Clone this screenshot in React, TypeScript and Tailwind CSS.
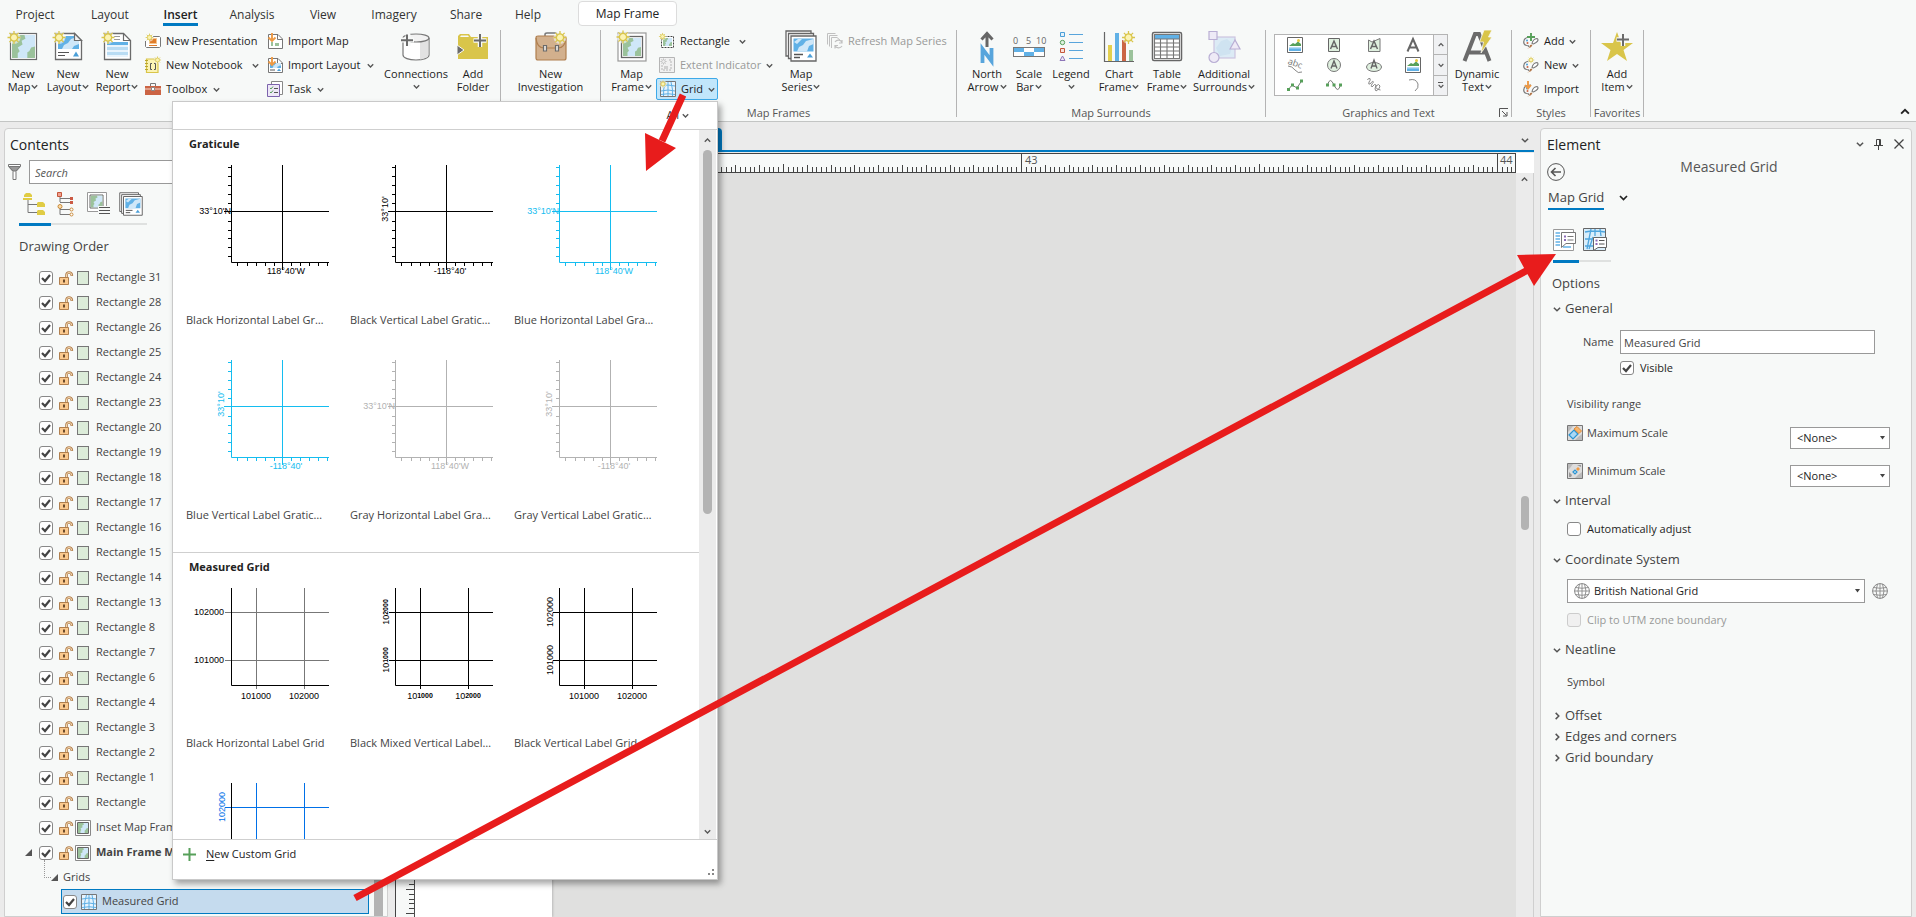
import React from 'react';

const Chev = ({ dir = 'down', size = 7, className = 'text-[#555]' }: { dir?: string; size?: number; className?: string }) => {
  const d = dir === 'up' ? 'M1 6 L4.5 2.5 L8 6' : dir === 'right' ? 'M3 1 L6.5 4.5 L3 8' : 'M1 3 L4.5 6.5 L8 3';
  return (
    <svg width={size} height={size} viewBox="0 0 9 9" className={`inline-block shrink-0 ${className}`}>
      <path d={d} fill="none" stroke="currentColor" strokeWidth="1.7" />
    </svg>
  );
};

const Icon = ({ size = 32, box = 32, children }: { size?: number; box?: number; children: React.ReactNode }) => (
  <svg width={size} height={size} viewBox={`0 0 ${box} ${box}`} fill="none" className="shrink-0 overflow-visible">
    {children}
  </svg>
);

const Sun = ({ x, y, s = 1, color = '#d9c54a', fill = '#fbf3b4' }: { x: number; y: number; s?: number; color?: string; fill?: string }) => (
  <g transform={`translate(${x} ${y}) scale(${s})`} stroke={color} strokeWidth="1.3">
    <circle r="6.5" fill="#f7f9f8" stroke="none" opacity=".6" />
    <path d="M0 -6.5V6.5M-6.5 0H6.5M-4.6 -4.6L4.6 4.6M-4.6 4.6L4.6 -4.6" />
    <circle r="3.6" fill={fill} />
  </g>
);

const MapArt = ({ x, y, w, h, land = '#9bc29b', sea = '#cfe7f8' }: { x: number; y: number; w: number; h: number; land?: string; sea?: string }) => (
  <svg x={x} y={y} width={w} height={h} viewBox="0 0 24 24" preserveAspectRatio="none">
    <path d="M0 0H24V24H0Z" fill={land} />
    <path d="M13 0H24V12L20 13L18 17L16 18V24H6V19L8 17L6 13L11 10L10 6L14 4Z" fill={sea} />
    <path d="M24 14V24H19V19L21 16Z" fill={land} />
  </svg>
);

const NewMapIcon = () => (
  <Icon>
    <rect x="3.500" y="3.500" width="26" height="26" fill="#fff" stroke="#6b6b6b" strokeWidth="1.2" />
    <MapArt x={5} y={5} w={23} h={23} />
    <Sun x={7} y={7.5} />
  </Icon>
);

const NewLayoutIcon = () => (
  <Icon>
    <path d="M3.500 3.500H22.500L29.500 10.500V29.500H3.500Z" fill="#fff" stroke="#6b6b6b" strokeWidth="1.3" />
    <path d="M6 6H22V11H27V19H6Z" fill="#61b1e6" />
    <path d="M10 19L12 15L16 13L19 9L22 8V11H27V14L22 16L20 19ZM6 6H14L11 11L6 13Z" fill="#cfe7f8" />
    <path d="M22.500 3.500V10.500H29.500Z" fill="#f3f3f3" stroke="#6b6b6b" strokeWidth="1.2" />
    <path d="M6 22.500H17M6 25.500H13" stroke="#555" strokeWidth="1.2" />
    <path d="M21 26.500L24 21.500L27 26.500Z" fill="#4b9fd8" />
    <Sun x={7} y={7.5} />
  </Icon>
);

const NewReportIcon = () => (
  <Icon>
    <path d="M3.500 3.500H22.500L29.500 10.500V29.500H3.500Z" fill="#fff" stroke="#6b6b6b" strokeWidth="1.3" />
    <path d="M22.500 3.500V10.500H29.500" stroke="#6b6b6b" strokeWidth="1.2" />
    <path d="M13 6.500H19M13 9.500H19" stroke="#999" />
    <path d="M6 12H27V15H6Z" fill="#61b1e6" />
    <path d="M6 15H27V27H6Z" fill="#e9f4fc" />
    <path d="M6 17H27V20H6ZM6 22H27V25H6Z" fill="#b9dcf3" />
    <Sun x={7} y={7.5} />
  </Icon>
);

const ConnectionsIcon = () => (
  <Icon>
    <path d="M3 8V25C3 28 9 30 16 30S29 28 29 25V8" fill="#fff" stroke="#777" strokeWidth="1.2" />
    <path d="M20 12C26 11 28.400 10 28.400 9V25C28.400 27 25 29 20 29.400Z" fill="#e2e2e2" />
    <ellipse cx="16" cy="8" rx="13" ry="4" fill="#f2f2f2" stroke="#777" strokeWidth="1.2" />
    <path d="M8 4V16M2 10H14" stroke="#f7f9f8" strokeWidth="5" />
    <path d="M7 4.500V16M1 10.200H13" stroke="#6b6b6b" strokeWidth="2" />
  </Icon>
);

const AddFolderIcon = () => (
  <Icon>
    <path d="M1 6L3 4H12L14 7H31V29H1Z" fill="#d9c54a" />
    <path d="M3 7L4 5.500H11L12 7Z" fill="#f7f9f8" />
    <path d="M0 15L7 20L0 25Z" fill="#6b6b6b" stroke="#f7f9f8" />
    <path d="M23 4V17M16.500 10.500H29.500" stroke="#f7f9f8" strokeWidth="4.500" />
    <path d="M23 4V17M17 10.500H29" stroke="#6b6b6b" strokeWidth="2" />
  </Icon>
);

const InvestigationIcon = () => (
  <Icon>
    <path d="M10 6V4.500Q10 3 12 3H20Q22 3 22 4.500V6" stroke="#777" strokeWidth="1.500" />
    <path d="M1 8Q1 6 3 6H29Q31 6 31 8V28Q31 30 29 30H3Q1 30 1 28Z" fill="#d2b08d" stroke="#b07f4f" strokeWidth="1.200" />
    <path d="M1 8Q2 18 9 18H23Q30 18 31 8" stroke="#b07f4f" strokeWidth="1.200" />
    <path d="M8.500 15.500H11.500V21H8.500ZM20.500 15.500H23.500V21H20.500Z" fill="#e8e4de" stroke="#6b6b6b" strokeWidth="1.200" />
    <Sun x={25} y={7.5} />
  </Icon>
);

const MapFrameIcon = () => (
  <Icon>
    <rect x="2" y="3" width="28" height="28" fill="#fff" stroke="#999" strokeWidth="1.2" />
    <rect x="5.500" y="6.500" width="21" height="21" fill="#fff" stroke="#666" strokeWidth="1.300" />
    <MapArt x={7} y={8} w={18} h={18} />
    <Sun x={7} y={7} />
  </Icon>
);

const MapSeriesIcon = ({ size = 32 }: { size?: number }) => (
  <Icon size={size}>
    <path d="M1 1H26V26H1Z" fill="#fff" stroke="#666" strokeWidth="1.300" />
    <path d="M3.500 3.500H28.500V28.500H3.500Z" fill="#fff" stroke="#666" strokeWidth="1.300" />
    <path d="M6 6H31V31H6Z" fill="#fff" stroke="#666" strokeWidth="1.300" />
    <path d="M8.500 8.500H28.500V21.500H8.500Z" fill="#61b1e6" />
    <path d="M12 21.500L14 17L18 15L21 11L28.500 9V14L24 16L22 21.500ZM9 12L13 9H17L12 14Z" fill="#cfe7f8" />
    <path d="M9 24.500H18M9 27.500H15" stroke="#555" strokeWidth="1.300" />
    <path d="M22 27.500L25 23.500L28 27.500Z" fill="#4b9fd8" />
  </Icon>
);

const NorthArrowIcon = () => (
  <Icon>
    <path d="M16 17V4M10.500 9.500L16 3.500L21.500 9.500" stroke="#666" strokeWidth="3" />
    <path d="M11.500 33V19L20.500 31V18" stroke="#58a5dc" strokeWidth="3.800" />
  </Icon>
);

const ScaleBarIcon = () => (
  <Icon>
    <text x="0" y="14" fontSize="9" fill="#666">0</text>
    <text x="13" y="14" fontSize="9" fill="#666">5</text>
    <text x="23" y="14" fontSize="9" fill="#666">10</text>
    <rect x="0.500" y="17.500" width="31" height="9" fill="#fff" stroke="#777" />
    <path d="M1 18H11V22H1ZM21 18H31V22H21ZM11 22H21V26H11Z" fill="#61b1e6" />
  </Icon>
);

const LegendIcon = () => (
  <Icon>
    <path d="M5.500 2.500H9.500V6.500H5.500Z" stroke="#4b9fd8" fill="#e3f1fb" />
    <circle cx="7.500" cy="12.500" r="2.200" stroke="#57a05a" fill="#dff0df" />
    <path d="M5.500 18.500H9.500V22.500H5.500Z" stroke="#c4573a" fill="#f8e0da" />
    <path d="M5 30.500L7.500 26L10 30.500Z" stroke="#8d76b8" fill="#eee8f7" />
    <path d="M14 4.500H28M14 12.500H28M14 20.500H28M14 28.500H28" stroke="#58a5dc" />
  </Icon>
);

const ChartIcon = () => (
  <Icon>
    <path d="M1.500 2V31.500H31" stroke="#666" strokeWidth="1.200" />
    <path d="M5 15H9V31H5Z" fill="#e3d04f" />
    <path d="M12 3H16V31H12Z" fill="#61b1e6" />
    <path d="M19 10H23V31H19Z" fill="#cb6444" />
    <path d="M26 20H30V31H26Z" fill="#9bc29b" />
    <Sun x={25.5} y={7.5} />
  </Icon>
);

const TableIcon = () => (
  <Icon>
    <rect x="1.500" y="2.500" width="29" height="28" rx="1.500" fill="#fff" stroke="#666" strokeWidth="1.500" />
    <rect x="4" y="5" width="24" height="4" fill="#61b1e6" />
    <path d="M3.500 4.500H28.500V28.500H3.500ZM3.500 9H28.500M3.500 13H28.500M3.500 17H28.500M3.500 21H28.500M3.500 25H28.500M9.500 9V28.500M16 9V28.500M22.500 9V28.500" stroke="#777" strokeWidth="1.100" />
  </Icon>
);

const SurroundsIcon = () => (
  <Icon>
    <rect x="6" y="7" width="21" height="21" fill="#dcebf5" stroke="#ccc4e0" strokeWidth="1.200" />
    <path d="M8 18L13 11L19 9L25 14L22 24L12 26Z" fill="#cfe3f1" />
    <path d="M1 1.500H9V9.500H1Z" fill="#eeeaf6" stroke="#b9aed4" strokeWidth="1.200" />
    <path d="M22 19L27 10L32 19Z" fill="#eeeaf6" stroke="#b9aed4" strokeWidth="1.200" />
    <circle cx="6" cy="27.500" r="5" fill="#eeeaf6" stroke="#b9aed4" strokeWidth="1.200" />
  </Icon>
);

const DynamicTextIcon = () => (
  <Icon>
    <path d="M3.500 31L14 4H18L28.500 31M8 22.500H24" stroke="#6b6b6b" strokeWidth="4" />
    <path d="M23 0H31L27.500 7H31L20 23L22.500 12H18.500Z" fill="#d9c54a" stroke="#f7f9f8" strokeWidth=".8" />
  </Icon>
);

const StarIcon = () => (
  <Icon>
    <path d="M16 2L20 13H32L22.500 20L26 31L16 24L6 31L9.500 20L0 13H12Z" fill="#d9c54a" />
    <path d="M22 3V16M15.500 9.500H28.500" stroke="#f7f9f8" strokeWidth="4.500" />
    <path d="M22 4V16M16 9.500H28" stroke="#6b6b6b" strokeWidth="2" />
  </Icon>
);

/* 16px icons */
const PresentationIcon = () => (
  <Icon size={16} box={16}>
    <path d="M8 3.500H14.500L15.500 4.500V13.500L14.500 14.500H1.500L.5 13.500V8" stroke="#777" fill="#fff" />
    <path d="M4.500 5.500H11.500V10.500H4.500Z" fill="#e07b2a" stroke="#f5c38b" />
    <path d="M4 12.500H12" stroke="#e07b2a" />
    <Sun x={4.500} y={4.500} s={0.6} />
  </Icon>
);

const NotebookIcon = () => (
  <Icon size={16} box={16}>
    <path d="M1.500 2H13V15.500H1.500Z" fill="#fbf3b4" stroke="#d9c54a" strokeWidth="1.200" />
    <path d="M0 3.500H3M0 6.500H3M0 9.500H3M0 12.500H3" stroke="#b9a52e" />
    <path d="M7 6.500H5.500V12.500H7M9 6.500H10.500V12.500H9" stroke="#555" />
    <Sun x={12.500} y={3} s={0.55} />
  </Icon>
);

const ToolboxIcon = () => (
  <Icon size={16} box={16}>
    <path d="M5.500 5V2.500H10.500V5" stroke="#777" />
    <path d="M0 5H16V14H0Z" fill="#cb6444" />
    <path d="M0 8H16" stroke="#f3d9d0" />
    <path d="M6.500 6.500H9.500V9.500H6.500Z" fill="#fff" stroke="#888" />
  </Icon>
);

const ImportMapIcon = ({ layout = false }: { layout?: boolean }) => (
  <Icon size={16} box={16}>
    <path d="M1.500 1.500H11L15.500 6V15.500H1.500Z" fill="#fff" stroke="#777" />
    <path d="M10.500 1.500V6.500H15" stroke="#777" />
    {layout ? (
      <>
        <MapArt x={3} y={6} w={11} h={5} land="#61b1e6" />
        <path d="M3 13H8" stroke="#555" />
        <path d="M10 14L12 11.500L14 14Z" fill="#4b9fd8" />
      </>
    ) : (
      <path d="M4 9H6V13H4ZM8 10H12V13H8Z" fill="#9bc29b" />
    )}
    <path d="M5 0V8M1.500 4.500L5 8L8.500 4.500" stroke="#ee9a45" strokeWidth="1.900" />
  </Icon>
);

const TaskIcon = () => (
  <Icon size={16} box={16}>
    <path d="M4.500 .500H15.500V13.500H4.500Z" fill="#fff" stroke="#888" />
    <path d="M.5 3.500H12.500V15.500H.5Z" fill="#eee8f7" stroke="#7c63ad" />
    <path d="M3 7L4 8L6 5.500M3 11L4 12L6 9.500" stroke="#57a05a" />
    <path d="M7 7.500H11M7 11.500H11" stroke="#555" />
  </Icon>
);

const RectangleIcon = () => (
  <Icon size={16} box={16}>
    <path d="M2.500 3.500H14.500V14.500H2.500Z" fill="#fff" stroke="#444" strokeDasharray="2 1" />
    <MapArt x={4} y={5} w={9} h={8} />
    <Sun x={3.500} y={3.500} s={0.55} />
  </Icon>
);

const ExtentIcon = () => (
  <Icon size={16} box={16}>
    <path d="M.5 .5H15.500V15.500H.5Z" fill="#f1f1f1" stroke="#b5b5b5" />
    <path d="M3 8V13H12V3H9" stroke="#b5b5b5" strokeDasharray="2 1" />
    <path d="M5 9H9V12H5Z" fill="#cfcfcf" />
    <Sun x={4.500} y={4.500} s={0.5} color="#b5b5b5" fill="#eee" />
  </Icon>
);

const GridIcon = ({ sun = false }: { sun?: boolean }) => (
  <Icon size={16} box={16}>
    <path d="M.5 .5H15.500V15.500H.5Z" fill="#e7f4fd" stroke="#777" />
    <path d="M1 5Q8 3 15 5M1 10Q8 8 15 10M1 13.500Q8 12 15 13.500M5.500 1Q3 8 3.500 15M8 1V15M11 1Q13 8 12.500 15" stroke="#5fb0e5" />
    {sun && <Sun x={3} y={3} s={0.55} />}
  </Icon>
);

const RefreshIcon = () => (
  <Icon size={16} box={16}>
    <path d="M.5 11.500V.5H8.500M2.500 13.500V2.500H10.500M4.500 15V4.500H10L13 7" stroke="#c0c0c0" />
    <path d="M15 9.500A4 4 0 0 0 8 9M8 12.500A4 4 0 0 0 15 13M15 7V10H12M8 15.500V12.500H11" stroke="#c0c0c0" strokeWidth="1.200" />
  </Icon>
);

const PaletteIcon = ({ kind }: { kind: string }) => (
  <Icon size={16} box={16}>
    <path d="M8 4Q1 4 .7 9Q.8 12 3.500 12.500Q6 12.500 6 14" stroke="#777" strokeWidth="1.200" />
    <circle cx="4" cy="7.500" r="1" fill="#4b9fd8" />
    <circle cx="4.500" cy="10" r="1" fill="#cb6444" />
    <path d="M9 10.500Q10 6 14 5.500Q16.500 7 13 9.500L10.500 11Z" fill="#fff" stroke="#777" strokeWidth="1.100" />
    <path d="M4 15.500Q7 15 7 12L9.500 11.500Q9 15 4 15.500Z" fill="#b3774a" />
    {kind === 'add' && <path d="M8 0V8M4 4H12" stroke="#57a05a" strokeWidth="1.900" />}
    {kind === 'new' && <Sun x={8} y={3} s={0.5} />}
    {kind === 'import' && <path d="M5 0V7M2 4L5 7.500L8 4" stroke="#ee9a45" strokeWidth="1.900" />}
  </Icon>
);

const PictureArt = () => (
  <g>
    <path d="M.5 .5H15.500V15.500H.5Z" fill="#fff" stroke="#666" />
    <path d="M2 9L6 6L8 7L11 4.500L14 7V9Z" fill="#57a05a" />
    <path d="M2 10H14V14H2Z" fill="#61b1e6" />
    <path d="M2 10H14V11.500H2Z" fill="#b9dcf3" />
    <circle cx="11.500" cy="3.500" r="1.500" fill="#e8c93a" />
  </g>
);

const galleryIcons: React.ReactNode[] = [
  <PictureArt />,
  <g><path d="M2.500 1.500H13.500V14.500H2.500Z" fill="#dff0df" stroke="#666" /><path d="M4.500 12L8 4L11.500 12M6 9.500H10" stroke="#666" strokeWidth="1.500" /></g>,
  <g><path d="M2.500 3L6 5L14 1.500V14.500H2.500Z" fill="#dff0df" stroke="#777" /><path d="M4.500 12L8 4L11.500 12M6 9.500H10" stroke="#666" strokeWidth="1.500" /></g>,
  <path d="M2.500 14.500L8 2L13.500 14.500M4.500 10.500H11.500" stroke="#666" strokeWidth="2" />,
  <g><path d="M1 9Q5 9 8 13T15 15" stroke="#888" /><text x="0" y="8" fontSize="9" fill="#777" transform="rotate(20 4 8)">abc</text></g>,
  <g><circle cx="8" cy="8" r="6.500" fill="#dff0df" stroke="#777" /><path d="M5 11.500L8 4L11 11.500M6 9H10" stroke="#666" strokeWidth="1.400" /></g>,
  <g><ellipse cx="8" cy="10" rx="7.500" ry="4.500" fill="#dff0df" stroke="#777" /><path d="M5 11.500L8 3L11 11.500M6 9H10" stroke="#666" strokeWidth="1.400" /></g>,
  <PictureArt />,
  <g><path d="M1.500 12.500L5 8L10 11L14.500 4" stroke="#777" /><path d="M0 11H3V14H0ZM4 6.500H7V9.500H4ZM9 9.500H12V12.500H9ZM13 2.500H16V5.500H13Z" fill="#57a05a" /></g>,
  <g><path d="M1.500 8Q4 -1 8 8T14.500 8" stroke="#777" /><path d="M0 6.500H3V9.500H0ZM6.500 6.500H9.500V9.500H6.500ZM13 6.500H16V9.500H13Z" fill="#57a05a" /></g>,
  <path d="M1.500 3Q2 1 4 1.500Q5 3 3 5Q2 8 4 7Q7 3 7.500 5Q4 9 6 10Q9 6 10 8Q8 13 10 14Q14 12 14 9Q13 6 10 9Q9 12 14.500 13" stroke="#888" />,
  <path d="M4 3Q11 1 13 7Q14 11 10 14" stroke="#888" />,
];

/* Ribbon pieces */
const Big = ({ icon, a, b, chev = false, w }: { icon: React.ReactNode; a: string; b?: string; chev?: boolean; w: string }) => (
  <button className={`flex flex-col items-center leading-[13px] whitespace-nowrap ${w}`}>
    {icon}
    <span className="mt-[5px]">{a}</span>
    <span className="flex h-[13px] items-center gap-px">
      {b}
      {chev && <Chev />}
    </span>
  </button>
);

const Small = ({ icon, label, chev = false, gap = 'gap-[6px]', className = '' }: { icon: React.ReactNode; label: string; chev?: boolean; gap?: string; className?: string }) => (
  <button className={`flex h-[22px] items-center gap-[5px] whitespace-nowrap ${className}`}>
    {icon}
    <span className={`flex items-center ${gap}`}>
      {label}
      {chev && <Chev />}
    </span>
  </button>
);

const Group = ({ label, w, children, launcher = false }: { label?: string; w: string; children: React.ReactNode; launcher?: boolean }) => (
  <div className={`relative flex h-[87px] shrink-0 flex-col border-r border-[#b4b4b4] ${w}`}>
    <div className="flex h-[74px] shrink-0 items-start">{children}</div>
    <div className="text-center leading-[18px] text-[#555]">{label}</div>
    {launcher && (
      <button aria-label="Open group options" className="absolute right-[3px] bottom-0">
        <svg width="9" height="9" viewBox="0 0 9 9" fill="none" stroke="#555" className="block">
          <path d="M.5 9V.5H9M3 3L7.500 7.500M8 4V8H4" />
        </svg>
      </button>
    )}
  </div>
);

const tabs = [
  { name: 'Project', w: 'w-[70px]' },
  { name: 'Layout', w: 'w-[80px]' },
  { name: 'Insert', w: 'w-[61px]' },
  { name: 'Analysis', w: 'w-[82px]' },
  { name: 'View', w: 'w-[60px]' },
  { name: 'Imagery', w: 'w-[82px]' },
  { name: 'Share', w: 'w-[62px]' },
  { name: 'Help', w: 'w-[62px]' },
];

const Ribbon = () => (
  <header className="h-[122px] shrink-0 border-b border-[#c3c5c4] bg-[#f7f9f8]">
    <nav className="flex h-[30px] text-[12px] text-[#333]">
      {tabs.map((tab) => (
        <button key={tab.name} className={`flex flex-col items-center pt-[6px] ${tab.w}`}>
          <span className={tab.name === 'Insert' ? 'border-b-3 border-[#007ac2] px-px leading-[17px] font-semibold text-[#222]' : 'leading-[17px]'}>
            {tab.name}
          </span>
        </button>
      ))}
      <button className="mt-px ml-[19px] h-[25px] w-[99px] rounded-sm border border-[#dcdcdc] bg-white text-[#222]">Map Frame</button>
    </nav>
    <div className="flex text-[#1d1d1d]">
      <Group w="w-[501px]">
        <Big w="w-[46px]" icon={<NewMapIcon />} a="New" b="Map" chev />
        <Big w="w-[44px]" icon={<NewLayoutIcon />} a="New" b="Layout" chev />
        <Big w="w-[54px]" icon={<NewReportIcon />} a="New" b="Report" chev />
        <div className="flex w-[123px] flex-col gap-[2px] pl-px">
          <Small icon={<PresentationIcon />} label="New Presentation" />
          <Small icon={<NotebookIcon />} label="New Notebook" gap="gap-[9px]" chev />
          <Small icon={<ToolboxIcon />} label="Toolbox" chev />
        </div>
        <div className="flex w-[114px] flex-col gap-[2px]">
          <Small icon={<ImportMapIcon />} label="Import Map" />
          <Small icon={<ImportMapIcon layout />} label="Import Layout" chev />
          <Small icon={<TaskIcon />} label="Task" chev />
        </div>
        <Big w="w-[70px]" icon={<ConnectionsIcon />} a="Connections" chev />
        <Big w="w-[44px]" icon={<AddFolderIcon />} a="Add" b="Folder" />
      </Group>
      <Group w="w-[100px]">
        <Big w="w-full" icon={<InvestigationIcon />} a="New" b="Investigation" />
      </Group>
      <Group w="w-[356px]" label="Map Frames">
        <Big w="w-[55px] pl-[6px]" icon={<MapFrameIcon />} a="Map" b="Frame" chev />
        <div className="flex w-[122px] flex-col gap-[2px]">
          <Small className="px-[3px]" icon={<RectangleIcon />} label="Rectangle" gap="gap-[9px]" chev />
          <Small className="px-[3px] text-[#999]" icon={<ExtentIcon />} label="Extent Indicator" gap="gap-[5px]" chev />
          <Small className="w-[62px] rounded-xs border border-[#3da9e8] bg-[#c1e6fb] px-[3px]" icon={<GridIcon sun />} label="Grid" gap="gap-[5px]" chev />
        </div>
        <Big w="w-[46px]" icon={<MapSeriesIcon />} a="Map" b="Series" chev />
        <Small className="pl-[3px] text-[#999]" icon={<RefreshIcon />} label="Refresh Map Series" />
      </Group>
      <Group w="w-[309px]" label="Map Surrounds">
        <Big w="ml-[6px] w-[48px]" icon={<NorthArrowIcon />} a="North" b="Arrow" chev />
        <Big w="w-[36px]" icon={<ScaleBarIcon />} a="Scale" b="Bar" chev />
        <Big w="w-[48px]" icon={<LegendIcon />} a="Legend" chev />
        <Big w="w-[48px]" icon={<ChartIcon />} a="Chart" b="Frame" chev />
        <Big w="w-[48px]" icon={<TableIcon />} a="Table" b="Frame" chev />
        <Big w="w-[66px]" icon={<SurroundsIcon />} a="Additional" b="Surrounds" chev />
      </Group>
      <Group w="w-[246px]" label="Graphics and Text" launcher>
        <div className="mt-[4px] ml-[8px] flex h-[62px] w-[174px] border border-[#b4b4b4] bg-white">
          <div className="grid flex-1 grid-cols-4 grid-rows-3 place-items-center">
            {galleryIcons.map((art, i) => (
              <Icon key={i} size={16} box={16}>{art}</Icon>
            ))}
          </div>
          <div className="flex w-[14px] flex-col divide-y divide-[#b4b4b4] border-l border-[#b4b4b4] bg-[#f0f1f3]">
            <button aria-label="Scroll gallery up" className="flex flex-1 items-center justify-center"><Chev dir="up" size={6} /></button>
            <button aria-label="Scroll gallery down" className="flex flex-1 items-center justify-center"><Chev size={6} /></button>
            <button aria-label="Expand gallery" className="flex flex-1 flex-col items-center justify-center">
              <span className="h-px w-[5px] bg-[#555]" />
              <Chev size={6} />
            </button>
          </div>
        </div>
        <Big w="w-[58px]" icon={<DynamicTextIcon />} a="Dynamic" b="Text" chev />
      </Group>
      <Group w="w-[79px]" label="Styles">
        <div className="flex flex-col gap-[2px] pl-[11px]">
          <Small icon={<PaletteIcon kind="add" />} label="Add" gap="gap-[5px]" chev />
          <Small icon={<PaletteIcon kind="new" />} label="New" gap="gap-[5px]" chev />
          <Small icon={<PaletteIcon kind="import" />} label="Import" />
        </div>
      </Group>
      <Group w="w-[53px]" label="Favorites">
        <Big w="w-full" icon={<StarIcon />} a="Add" b="Item" chev />
      </Group>
      <button aria-label="Collapse ribbon" className="mt-auto mr-[6px] ml-auto flex">
        <Chev dir="up" size={10} className="text-[#222]" />
      </button>
    </div>
  </header>
);

/* Grid gallery */
type Thumb = { name: string; color: string; kind: 'h' | 'v' | 'mixed'; axis?: string };

const graticules: Thumb[] = [
  { name: 'Black Horizontal Label Graticule', color: '#000', kind: 'h' },
  { name: 'Black Vertical Label Graticule', color: '#000', kind: 'v' },
  { name: 'Blue Horizontal Label Graticule', color: '#14bdf0', kind: 'h' },
  { name: 'Blue Vertical Label Graticule', color: '#14bdf0', kind: 'v' },
  { name: 'Gray Horizontal Label Graticule', color: '#b2b2b2', kind: 'h' },
  { name: 'Gray Vertical Label Graticule', color: '#b2b2b2', kind: 'v' },
];

const measured: Thumb[] = [
  { name: 'Black Horizontal Label Grid', color: '#777', kind: 'h', axis: '#000' },
  { name: 'Black Mixed Vertical Label Grid', color: '#000', kind: 'mixed', axis: '#000' },
  { name: 'Black Vertical Label Grid', color: '#000', kind: 'v', axis: '#000' },
  { name: 'Blue Vertical Label Grid', color: '#0070e8', kind: 'v', axis: '#000' },
];

const sideTicks = [2.5, 11.5, 20.5, 29.5, 38.5, 56.5, 65.5, 73.5, 82.5, 91.5];
const baseTicks = [51.5, 61.5, 70.5, 79.5, 88.5, 105.5, 114.5, 123.5, 132.5, 141.5];

const GraticuleArt = ({ color, kind }: Thumb) => (
  <svg width="144" height="144" fill="none" stroke={color} fontSize="9" className="font-['Liberation_Sans',sans-serif]">
    <path d="M45.500 0V97.500H143M38 46.500H143M96.500 0V105" />
    {sideTicks.map((y) => <path key={y} d={`M42 ${y}H45`} />)}
    {baseTicks.map((x) => <path key={x} d={`M${x} 98V101`} />)}
    <g fill={color} stroke="none">
      {kind === 'h' ? <text x="45" y="49" textAnchor="end">33°10'N</text> : <text textAnchor="middle" transform="translate(38 44) rotate(-90)">33°10'</text>}
      <text x="100" y="109" textAnchor="middle">{kind === 'h' ? "118°40'W" : "-118°40'"}</text>
    </g>
  </svg>
);

const MeasuredArt = ({ color, kind, axis }: Thumb) => {
  const label = color === '#777' ? '#000' : color;
  const split = (n: string) => (
    <>
      <tspan>{n.slice(0, 2)}</tspan>
      <tspan fontSize="7" dy="-1" fontWeight="bold">{n.slice(2)}</tspan>
    </>
  );
  return (
    <svg width="144" height="144" fill="none" stroke={color} fontSize="9" className="font-['Liberation_Sans',sans-serif]">
      <path d="M39 24.500H143M39 72.500H143M70.500 0V101M118.500 0V101" />
      <path d="M45.500 0V97.500H143" stroke={axis} />
      <g fill={label} stroke="none" textAnchor="middle">
        {['102000', '101000'].map((n, i) =>
          kind === 'h' ? (
            <text key={n} x="38" y={27 + i * 48} textAnchor="end">{n}</text>
          ) : (
            <text key={n} transform={`translate(39 ${24 + i * 48}) rotate(-90)`}>{kind === 'mixed' ? split(n) : n}</text>
          ),
        )}
        {['101000', '102000'].map((n, i) => (
          <text key={n} x={70 + i * 48} y="111">{kind === 'mixed' ? split(n) : n}</text>
        ))}
      </g>
    </svg>
  );
};

const GallerySection = ({ title, items, art: Art }: { title: string; items: Thumb[]; art: React.FC<Thumb> }) => (
  <section className="border-b border-[#cfcfcf] pb-[26px] pl-[13px]">
    <h3 className="h-[35px] pt-[5px] pl-[3px] leading-[18px] font-bold text-[#222]">{title}</h3>
    <div className="grid w-[492px] grid-cols-3 gap-y-[29px]">
      {items.map((item) => (
        <button key={item.name} className="w-[144px] text-left text-[#444]">
          <Art {...item} />
          <span className="block w-[142px] truncate leading-[22px]">{item.name}</span>
        </button>
      ))}
    </div>
  </section>
);

const GridMenu = () => (
  <div className="absolute top-[101px] left-[172px] z-20 flex h-[779px] w-[546px] flex-col border border-[#c9c9c9] bg-white shadow-[3px_4px_6px_rgba(0,0,0,0.35)]">
    <div className="flex h-[28px] shrink-0 justify-end border-b border-[#cfcfcf] pr-[28px]">
      <button className="flex items-center gap-[3px] text-[#333]">All <Chev /></button>
    </div>
    <div className="flex min-h-0 flex-1">
      <div className="flex-1 overflow-hidden">
        <GallerySection title="Graticule" items={graticules} art={GraticuleArt} />
        <GallerySection title="Measured Grid" items={measured} art={MeasuredArt} />
      </div>
      <div className="mr-px flex w-[17px] flex-col items-center bg-[#ebebeb]">
        <div className="flex h-[20px] items-center"><Chev dir="up" /></div>
        <div className="h-[364px] w-[9px] rounded-full bg-[#b3b3b3]" />
        <div className="mt-auto flex h-[16px] items-center"><Chev /></div>
      </div>
    </div>
    <div className="relative h-[40px] shrink-0 border-t border-[#cfcfcf] pt-[4px] pl-[10px]">
      <button className="flex h-[20px] items-center gap-[10px] text-[#222]">
        <svg width="13" height="13" stroke="#57a05a" strokeWidth="2"><path d="M6.500 0V13M0 6.500H13" /></svg>
        <span><u className="underline-offset-2">N</u>ew Custom Grid</span>
      </button>
      <svg width="7" height="7" className="absolute right-[3px] bottom-[3px] fill-[#888]">
        <path d="M5 0H7V2H5ZM5 4H7V6H5ZM1 4H3V6H1Z" />
      </svg>
    </div>
  </div>
);

/* Contents pane */
const CheckBox = ({ id, checked = false, disabled = false }: { id: string; checked?: boolean; disabled?: boolean }) => (
  <span className="relative flex shrink-0">
    <input
      id={id}
      type="checkbox"
      defaultChecked={checked}
      disabled={disabled}
      className="peer h-[14px] w-[14px] appearance-none rounded-[3px] border border-[#888] bg-white disabled:border-[#ccc] disabled:bg-[#f0f0f0]"
    />
    <svg width="14" height="14" className="pointer-events-none absolute hidden fill-none stroke-[#444] peer-checked:block">
      <path d="M3 7L6 10L11 4" strokeWidth="2.200" />
    </svg>
  </span>
);

const Check = ({ id, label, checked = false, disabled = false, className = '' }: { id: string; label: string; checked?: boolean; disabled?: boolean; className?: string }) => (
  <div className={`flex items-center gap-[6px] ${disabled ? 'text-[#999]' : 'text-[#1d1d1d]'} ${className}`}>
    <CheckBox id={id} checked={checked} disabled={disabled} />
    <label htmlFor={id}>{label}</label>
  </div>
);

const LockIcon = () => (
  <Icon size={14} box={14}>
    <path d="M7.500 7V4Q7.500 1.500 10 1.500T12.800 4V5" stroke="#b07f4f" strokeWidth="2.600" />
    <path d="M7.500 7V4Q7.500 1.500 10 1.500T12.800 4V4.500" stroke="#f7d9b0" strokeWidth="1" />
    <path d="M.5 6.500H9.500V13.500H.5Z" fill="#fbc98e" stroke="#b07f4f" />
    <path d="M4 8.500H6V11.500H4Z" fill="#6b4a2a" />
  </Icon>
);

const MapSwatch = () => (
  <Icon size={16} box={16}>
    <path d="M.5 .5H15.500V15.500H.5Z" fill="#fff" stroke="#888" />
    <path d="M2.500 2.500H13.500V13.500H2.500Z" stroke="#666" />
    <MapArt x={3} y={3} w={10} h={10} />
  </Icon>
);

const rectangles = [31, 28, 26, 25, 24, 23, 20, 19, 18, 17, 16, 15, 14, 13, 8, 7, 6, 4, 3, 2, 1];
const layers = [...rectangles.map((n) => `Rectangle ${n}`), 'Rectangle'];

const Expander = () => (
  <svg width="7" height="7" className="fill-[#555]"><path d="M7 0V7H0Z" /></svg>
);

const ContentsPane = () => (
  <aside className="mt-[6px] flex w-[384px] shrink-0 flex-col overflow-hidden rounded-t-sm border border-[#cfcfcf] bg-[#f7f9f8] text-[#444]">
    <h2 className="h-[31px] shrink-0 pl-[5px] text-[14px] leading-[32px] text-[#222]">Contents</h2>
    <div className="flex h-[24px] shrink-0 items-center gap-[8px] pl-[3px]">
      <svg width="13" height="16" fill="none" stroke="#777">
        <path d="M.5 .5H12.500V2.500L8 7.500V15.500H5V7.500L.5 2.500Z" fill="#fff" />
        <path d="M1 2.500H12L8 7H5Z" fill="#999" />
      </svg>
      <input aria-label="Search" placeholder="Search" className="h-[24px] w-[342px] border border-[#999] bg-white px-[5px] placeholder:text-[#555] placeholder:italic" />
    </div>
    <div className="mt-[8px] flex h-[24px] shrink-0 gap-[8px] pl-[18px]">
      <Icon size={24} box={24}>
        <path d="M5 8V20.500H14M5 12.500H14" stroke="#777" />
        <path d="M3 1H7L9 3V5H1V3ZM0 6H9V8H0ZM15 10H20L22 12V15H14V11ZM15 18H20L22 20V23H14V19Z" fill="#e0cc44" />
      </Icon>
      <Icon size={24} box={24}>
        <path d="M5 5V10M5 6.500H15M5 10.500H15M5 16V22.500H15M5 17.500H15" stroke="#777" />
        <path d="M2.500 .5H6.500V4.500H2.500Z" fill="#f0a090" stroke="#c4573a" />
        <path d="M15 5H18V8H15ZM15 9H18V12H15Z" fill="#cb5a44" />
        <circle cx="5" cy="14.500" r="2" fill="#fbdca8" stroke="#c98a3a" />
        <circle cx="16.500" cy="17.500" r="1.500" fill="#fff" stroke="#c98a3a" />
        <circle cx="16.500" cy="22.500" r="1.500" fill="#fff" stroke="#c98a3a" />
      </Icon>
      <Icon size={24} box={24}>
        <path d="M.5 .5H19.500V19.500H.5Z" fill="#fff" stroke="#999" />
        <path d="M3 3H16V16H3Z" stroke="#666" />
        <MapArt x={3.500} y={3.500} w={12} h={12} />
        <path d="M11 14H23V24H11Z" fill="#f7f9f8" />
        <path d="M12 15.500H23M12 18.500H23M12 21.500H23" stroke="#555" />
      </Icon>
      <MapSeriesIcon size={24} />
    </div>
    <div className="mt-[7px] ml-[14px] h-[2px] w-[128px] shrink-0 bg-[#dfe1e0]">
      <div className="h-[3px] w-[32px] bg-[#007ac2]" />
    </div>
    <h3 className="mt-[9px] mb-[7px] h-[24px] shrink-0 pl-[14px] text-[13px] leading-[24px]">Drawing Order</h3>
    <div className="flex min-h-0 flex-1">
      <ul className="w-[369px] shrink-0">
        {layers.map((name, i) => (
          <li key={name} className="flex h-[25px] items-center pl-[34px]">
            <CheckBox id={`layer-${i}`} checked />
            <span className="mx-[4px] ml-[6px]"><LockIcon /></span>
            <span className="h-[14px] w-[12px] border border-[#777] bg-[#dcecd9]" />
            <label htmlFor={`layer-${i}`} className="pl-[7px]">{name}</label>
          </li>
        ))}
        <li className="flex h-[25px] items-center pl-[34px]">
          <CheckBox id="inset-frame" checked />
          <span className="mx-[2px] ml-[6px]"><LockIcon /></span>
          <MapSwatch />
          <label htmlFor="inset-frame" className="pl-[5px]">Inset Map Frame</label>
        </li>
        <li className="flex h-[25px] items-center pl-[20px]">
          <Expander />
          <span className="ml-[7px]"><CheckBox id="main-frame" checked /></span>
          <span className="mx-[2px] ml-[6px]"><LockIcon /></span>
          <MapSwatch />
          <label htmlFor="main-frame" className="pl-[5px] font-bold">Main Frame Map</label>
        </li>
        <li className="flex h-[24px] items-center pl-[39px]">
          <span className="mb-[16px] h-[18px] w-[7px] border-b border-l border-dotted border-[#999]" />
          <Expander />
          <span className="pl-[5px]">Grids</span>
        </li>
        <li className="ml-[56px] flex h-[25px] w-[308px] items-center border border-[#007ac2] bg-[#c5dbee] pl-px">
          <CheckBox id="measured-grid" checked />
          <span className="mx-[4px]"><GridIcon /></span>
          <label htmlFor="measured-grid" className="pl-px">Measured Grid</label>
        </li>
      </ul>
      <div className="w-[9px] bg-[#b3b3b3]" />
    </div>
  </aside>
);

/* Layout view */
const topTicks = Array.from({ length: 240 }, (_, i) => i - 120);
const sideRulerTicks = Array.from({ length: 190 }, (_, i) => i);

const LayoutView = () => (
  <main className="ml-[7px] flex min-w-0 flex-1 flex-col">
    <div className="flex h-[30px] shrink-0 justify-between border-b-2 border-[#007ac2] pt-[6px]">
      <button aria-label="Layout view" className="w-[327px] rounded-t-sm bg-[#007ac2]" />
      <button aria-label="View list" className="mr-[5px]"><Chev size={8} /></button>
    </div>
    <div className="flex h-[21px] shrink-0 pt-px">
      <div className="relative flex-1 border border-[#444] bg-[#f7f9f8]">
        <svg width="100%" height="18" className="block" stroke="#444">
          {topTicks.map((k) => {
            const x = Math.round(625 + k * 4.76) + 0.5;
            const y = k % 100 === 0 ? 0 : k % 50 === 0 ? 10 : k % 5 === 0 ? 11 : 13;
            return <path key={k} d={`M${x} ${y}V18`} />;
          })}
          <text x="629" y="10" fontSize="11" fill="#555" stroke="none">43</text>
          <text x="1104" y="10" fontSize="11" fill="#555" stroke="none">44</text>
        </svg>
      </div>
      <div className="w-[18px] bg-white" />
    </div>
    <div className="flex min-h-0 flex-1">
      <svg width="20" height="100%" className="shrink-0 border-l border-[#444] bg-[#f7f9f8]" stroke="#444">
        <path d="M18.500 0V800" />
        {sideRulerTicks.map((k) => {
          const y = Math.round(k * 4.76 + 2) + 0.5;
          return <path key={k} d={`M${k % 5 === 0 ? 10 : 13} ${y}H18`} />;
        })}
      </svg>
      <div className="flex-1 bg-[#e0e0df]">
        <div className="h-full w-[137px] bg-white shadow-[1px_0_2px_#bbb]" />
      </div>
      <div className="flex w-[18px] flex-col items-center border-r border-[#cfcfcf] bg-[#ebebeb] pt-[3px]">
        <Chev dir="up" size={7} />
        <div className="mt-[313px] h-[34px] w-[8px] rounded-full bg-[#b3b3b3]" />
      </div>
    </div>
  </main>
);

/* Element pane */
const SectionTitle = ({ label, open = true, className = '' }: { label: string; open?: boolean; className?: string }) => (
  <button className={`flex items-center gap-[4px] pl-[12px] text-[13px] text-[#444] ${className}`}>
    <Chev dir={open ? 'down' : 'right'} size={8} />
    {label}
  </button>
);

const Caret = () => (
  <svg width="5" height="4" className="pointer-events-none absolute top-1/2 right-[5px] -translate-y-1/2 fill-[#444]">
    <path d="M0 0H5L2.500 3.500Z" />
  </svg>
);

const Globe = () => (
  <Icon size={16} box={16}>
    <circle cx="8" cy="8" r="7.400" stroke="#888" />
    <path d="M8 .5V15.500M.5 8H15.500M1.500 4.500Q8 6 14.500 4.500M1.500 11.500Q8 13 14.500 11.500M5.500 1Q2.500 8 5.500 15M10.500 1Q13.500 8 10.500 15" stroke="#888" strokeWidth=".9" />
  </Icon>
);

const ScaleIcon = ({ small = false }: { small?: boolean }) => (
  <Icon size={16} box={16}>
    <path d="M.5 .5H15.500V15.500H.5Z" fill="#ddd" stroke="#777" />
    <path d="M1 1H6L3 5L1 7ZM15 9V15H8L11 12Z" fill="#bbb" />
    {small ? (
      <>
        <path d="M2 9L5 12L4 14H2ZM10 2H14V4Z" fill="#999" />
        <path d="M6 9L8 7L10 9L8 11Z" fill="#cfe7f8" stroke="#2b94d1" strokeWidth="1.200" />
        <path d="M9 6L11 4L13 6L11 8Z" fill="#ee9a45" />
      </>
    ) : (
      <>
        <path d="M2 10L7 5L11 9L6 14Z" fill="#a9d8f5" stroke="#2b94d1" strokeWidth="1.200" />
        <path d="M7 4L10 1.500L14.500 6L12 8.500Z" fill="#f5b56e" stroke="#e08a35" />
      </>
    )}
  </Icon>
);

const ScaleRow = ({ label, id, small = false, className = '' }: { label: string; id: string; small?: boolean; className?: string }) => (
  <div className={`flex h-[24px] items-start pl-[26px] ${className}`}>
    <ScaleIcon small={small} />
    <label htmlFor={id} className="pl-[4px] leading-[16px] text-[#444]">{label}</label>
    <div className="relative mt-[2px] mr-[21px] ml-auto">
      <select id={id} className="h-[22px] w-[100px] appearance-none border border-[#999] bg-white px-[6px] text-[#222]">
        <option>&lt;None&gt;</option>
      </select>
      <Caret />
    </div>
  </div>
);

const ElementPane = () => (
  <aside className="mt-[6px] mr-[4px] ml-[6px] flex w-[372px] shrink-0 flex-col rounded-t-sm border border-[#cfcfcf] bg-[#f7f9f8] text-[#444]">
    <div className="flex h-[30px] items-center">
      <h2 className="flex-1 pl-[6px] text-[14px] text-[#222]">Element</h2>
      <button aria-label="Pane menu" className="mr-[10px] flex"><Chev size={8} /></button>
      <button aria-label="Pin pane" className="mr-[11px]">
        <svg width="9" height="11" className="block fill-none stroke-[#444]"><path d="M2.500 6V.5H6.500V6M5.500 1V6M0 6.500H9M4.500 7V11" /></svg>
      </button>
      <button aria-label="Close pane" className="mr-[7px]">
        <svg width="10" height="10" className="block fill-none stroke-[#444] stroke-[1.3]"><path d="M.5 .5L9.500 9.500M9.500 .5L.5 9.500" /></svg>
      </button>
    </div>
    <div className="flex h-[25px] items-center">
      <button aria-label="Back" className="ml-[6px]">
        <svg width="18" height="18" className="block fill-none stroke-[#555]">
          <circle cx="9" cy="9" r="8.400" />
          <path d="M14 9H4.500M8.500 5L4.500 9L8.500 13" strokeWidth="1.600" />
        </svg>
      </button>
      <span className="flex-1 pr-[18px] pb-[10px] text-center text-[14px] text-[#555]">Measured Grid</span>
    </div>
    <div className="flex h-[27px] items-center pl-[7px]">
      <button className="mt-[2px] h-[23px] border-b-2 border-[#007ac2] text-[13px]">Map Grid</button>
      <button aria-label="More element options" className="ml-[15px] flex"><Chev size={9} className="text-[#222]" /></button>
    </div>
    <div className="mt-[16px] flex gap-[6px] pl-[12px]">
      <Icon size={24} box={24}>
        <path d="M.500 2.500H20.500V23.500H.500Z" fill="#fff" stroke="#999" />
        <path d="M2.500 6H7M2.500 9H7M2.500 12H7M2.500 15H7M2.500 18H7M10 20H18" stroke="#61b1e6" strokeWidth="1.500" />
        <path d="M8.500 5.500H22.500V16.500H13L8.500 20.500Z" fill="#fff" stroke="#777" />
        <path d="M11 9.500H13M11 13H13" stroke="#8d6bb8" strokeWidth="2" />
        <path d="M14.500 9.500H20.500M14.500 13H20.500" stroke="#777" />
      </Icon>
      <Icon size={24} box={24}>
        <path d="M.500 1.500H22.500V23.500H.500Z" fill="#d9eefb" stroke="#666" />
        <path d="M2 5Q11 3 22 5M2 12H10M2 19H10M8 2L4 22M12 2V9M17 2L18 9M10 10L6 22" stroke="#4fa6de" strokeWidth="1.300" />
        <path d="M10.500 10.500H23.500V20.500H15L10.500 23.500Z" fill="#fff" stroke="#666" />
        <path d="M12.500 13.500H14.500M12.500 17H14.500" stroke="#8d6bb8" strokeWidth="2" />
        <path d="M16 13.500H21.500M16 17H21.500" stroke="#555" />
      </Icon>
    </div>
    <div className="mt-[9px] ml-[12px] h-[2px] w-[58px] bg-[#dfe1e0]">
      <div className="h-[3px] w-[26px] bg-[#007ac2]" />
    </div>
    <h3 className="mt-[6px] h-[30px] pl-[11px] text-[13px] leading-[30px]">Options</h3>

    <SectionTitle label="General" className="h-[22px]" />
    <div className="mt-[10px] flex h-[24px] items-center pl-[42px]">
      <label htmlFor="grid-name" className="w-[37px]">Name</label>
      <input id="grid-name" defaultValue="Measured Grid" className="h-[24px] w-[255px] border border-[#999] bg-white px-[3px]" />
    </div>
    <Check id="visible" label="Visible" checked className="mt-[6px] h-[16px] pl-[79px]" />
    <p className="mt-[17px] h-[22px] pl-[26px] leading-[22px]">Visibility range</p>
    <ScaleRow id="max-scale" label="Maximum Scale" className="mt-[10px]" />
    <ScaleRow id="min-scale" label="Minimum Scale" small className="mt-[14px]" />

    <SectionTitle label="Interval" className="mt-[3px] h-[22px]" />
    <Check id="auto-adjust" label="Automatically adjust" className="mt-[6px] h-[22px] pl-[26px]" />

    <SectionTitle label="Coordinate System" className="mt-[9px] h-[22px]" />
    <div className="mt-[8px] flex h-[24px] items-center gap-[7px] pl-[26px]">
      <div className="relative">
        <span className="pointer-events-none absolute top-[4px] left-[7px]"><Globe /></span>
        <select aria-label="Coordinate system" className="h-[24px] w-[298px] appearance-none border border-[#999] bg-white pl-[26px] text-[#222]">
          <option>British National Grid</option>
        </select>
        <Caret />
      </div>
      <button aria-label="Choose coordinate system"><Globe /></button>
    </div>
    <Check id="clip-utm" label="Clip to UTM zone boundary" disabled className="mt-[6px] h-[22px] pl-[26px]" />

    <SectionTitle label="Neatline" className="mt-[8px] h-[22px]" />
    <p className="mt-[10px] mb-[12px] h-[22px] pl-[26px] leading-[22px]">Symbol</p>

    <SectionTitle label="Offset" open={false} className="h-[21px]" />
    <SectionTitle label="Edges and corners" open={false} className="h-[21px]" />
    <SectionTitle label="Grid boundary" open={false} className="h-[21px]" />
  </aside>
);

const App = () => (
  <div className="relative flex h-screen flex-col overflow-hidden bg-[#ebebeb] font-['Open_Sans',sans-serif] text-[11px]">
    <Ribbon />
    <div className="flex min-h-0 flex-1 pl-[4px]">
      <ContentsPane />
      <LayoutView />
      <ElementPane />
    </div>
    <GridMenu />
    {/* Callout arrows */}
    <svg className="pointer-events-none absolute inset-0 z-30 h-full w-full" fill="#e81c1c" stroke="#e81c1c">
      <path d="M683 95L662 141M355 898L1528 270" strokeWidth="7" />
      <path d="M645 133L676 148L646 171ZM1517 255L1556 254L1534 286Z" stroke="none" />
    </svg>
  </div>
);

export default App;
